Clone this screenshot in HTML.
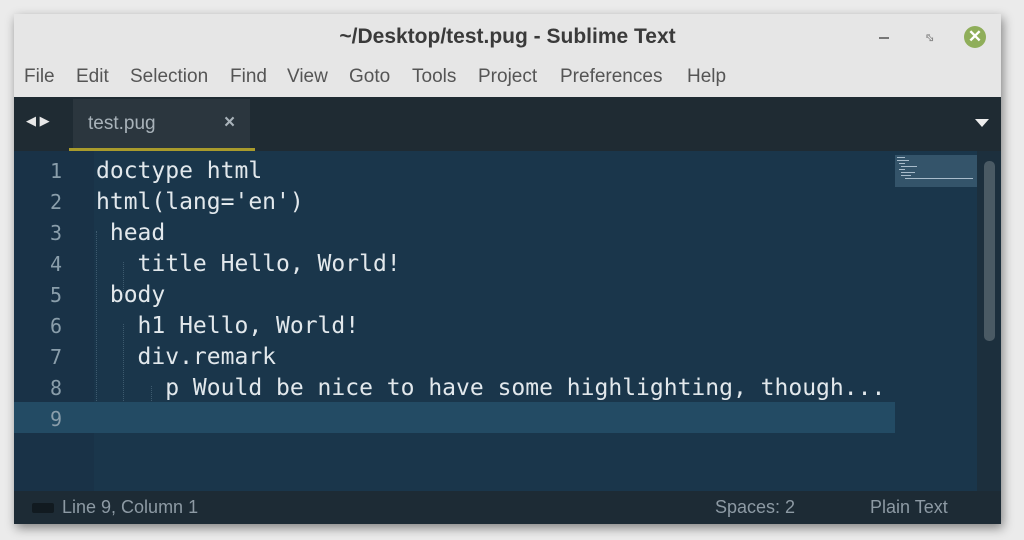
<!DOCTYPE html>
<html><head><style>
body{margin:0;width:1024px;height:540px;background:#ebebeb;position:relative;overflow:hidden;font-family:"Liberation Sans",sans-serif}
.win{position:absolute;left:14px;top:14px;width:987px;height:510px;background:#e6e6e6;box-shadow:2px 4px 10px rgba(0,0,0,.45)}
.title{position:absolute;top:11px;left:0;width:100%;text-align:center;font-size:21px;font-weight:bold;color:#3a3a3a}
.menu span{position:absolute;top:52px;font-size:19px;color:#555}
.tabbar{position:absolute;left:0;top:83px;width:987px;height:54px;background:#1f2b33}
.tab{position:absolute;left:59px;top:2px;width:177px;height:49px;background:#2b363e;color:#a9b3ba;font-size:19px}
.uline{position:absolute;left:55px;top:51px;width:186px;height:3px;background:#a99b2c}
.ed{position:absolute;left:0;top:137px;width:963px;height:340px;background:#1a364b}
.gut{position:absolute;left:0;top:0;width:80px;height:340px;background:#193247}
.rgut{position:absolute;left:963px;top:137px;width:24px;height:340px;background:#1c2f3d}
.sb{position:absolute;left:970px;top:147px;width:11px;height:180px;background:#4a5a64;border-radius:5px}
.mini{position:absolute;left:881px;top:4px;width:82px;height:32px;background:#34546a}
.mini i{position:absolute;height:1px;background:#a9bccb}
.cur{position:absolute;left:0;top:251px;width:881px;height:31px;background:#234b64}
.ln{position:absolute;left:0;width:48px;text-align:right;font:20px/31px "DejaVu Sans Mono",monospace;color:#8a9eab}
.code{position:absolute;left:82px;font:23px/31px "DejaVu Sans Mono",monospace;color:#e2e8ec;white-space:pre}
.guide{position:absolute;width:1px;border-left:1px dotted #3d5a6e}
.status{position:absolute;left:0;top:477px;width:987px;height:33px;background:#1d2b35;color:#8d9aa4;font-size:18px}
</style></head><body>
<div class="win">
 <div class="title">~/Desktop/test.pug - Sublime Text</div>
 <div style="position:absolute;left:865px;top:23px;width:10px;height:2px;background:#777"></div>
 <div style="position:absolute;left:911px;top:17px;font-size:12px;color:#888;transform:rotate(-45deg)">⇕</div>
 <div style="position:absolute;left:950px;top:12px;width:22px;height:22px;border-radius:50%;background:#8fae5a;color:#fff;font-size:17px;font-weight:bold;text-align:center;line-height:22px">✕</div>
 <div class="menu"><span style="left:10px">File</span><span style="left:62px">Edit</span><span style="left:116px">Selection</span><span style="left:216px">Find</span><span style="left:273px">View</span><span style="left:335px">Goto</span><span style="left:398px">Tools</span><span style="left:464px">Project</span><span style="left:546px">Preferences</span><span style="left:673px">Help</span></div>
 <div class="tabbar">
  <div style="position:absolute;left:12px;top:16px;color:#e8e8e8;font-size:13px">◀ ▶</div>
  <div class="tab"><span style="position:absolute;left:15px;top:14px">test.pug</span><span style="position:absolute;left:151px;top:13px;font-weight:bold">×</span></div>
  <div class="uline"></div>
  <div style="position:absolute;left:961px;top:22px;width:0;height:0;border-left:7px solid transparent;border-right:7px solid transparent;border-top:8px solid #eee"></div>
 </div>
 <div class="ed">
  <div class="gut"></div>
  <div class="cur"></div>
  <div class="mini"><i style="left:2px;top:2px;width:8px"></i><i style="left:2px;top:5px;width:12px"></i><i style="left:4px;top:8px;width:6px"></i><i style="left:6px;top:11px;width:16px"></i><i style="left:4px;top:14px;width:6px"></i><i style="left:6px;top:17px;width:14px"></i><i style="left:6px;top:20px;width:10px"></i><i style="left:10px;top:23px;width:68px"></i></div>
  <div class="guide" style="left:82px;top:80px;height:170px"></div>
  <div class="guide" style="left:109px;top:111px;height:31px"></div>
  <div class="guide" style="left:109px;top:173px;height:77px"></div>
  <div class="guide" style="left:137px;top:235px;height:15px"></div>
 </div>
 <div style="position:absolute;left:0;top:142px">
  <div class="ln" style="top:0">1<br>2<br>3<br>4<br>5<br>6<br>7<br>8<br>9</div>
  <div class="code" style="top:0">doctype html
html(lang='en')
 head
   title Hello, World!
 body
   h1 Hello, World!
   div.remark
     p Would be nice to have some highlighting, though...
</div>
 </div>
 <div class="rgut"></div><div class="sb"></div>
 <div class="status">
  <div style="position:absolute;left:18px;top:12px;width:22px;height:10px;background:#111a20;border-radius:2px"></div>
  <span style="position:absolute;left:48px;top:6px">Line 9, Column 1</span>
  <span style="position:absolute;left:701px;top:6px">Spaces: 2</span>
  <span style="position:absolute;left:856px;top:6px">Plain Text</span>
 </div>
</div>
</body></html>
